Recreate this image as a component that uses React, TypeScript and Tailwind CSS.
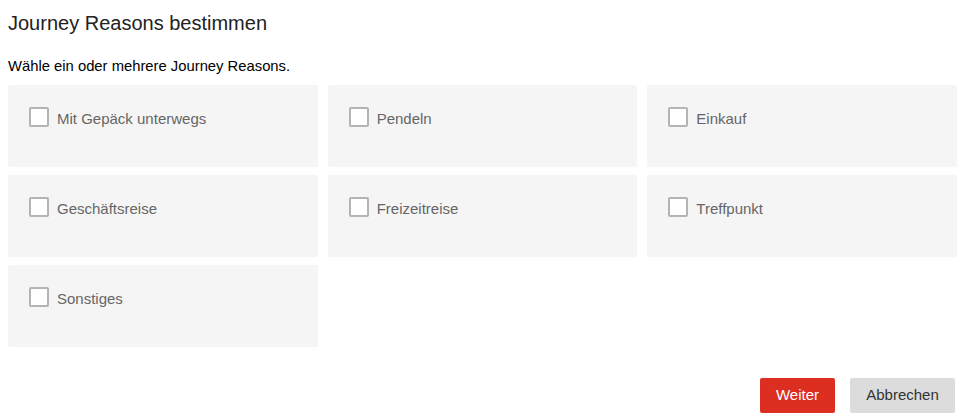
import { useState } from 'react';

const reasons = [
  'Mit Gepäck unterwegs',
  'Pendeln',
  'Einkauf',
  'Geschäftsreise',
  'Freizeitreise',
  'Treffpunkt',
  'Sonstiges',
];

export default function App() {
  const [selected, setSelected] = useState<string[]>([]);

  const toggle = (r: string) => {
    setSelected((prev) => (prev.includes(r) ? prev.filter((x) => x !== r) : [...prev, r]));
  };

  return (
    <div className="w-[960px] h-[418px] bg-white pl-2 pr-[3px] font-['Liberation_Sans',Arial,sans-serif]">
      {/* Header */}
      <h1 className="pt-[11px] text-[20px] leading-[24px] text-[#222]">Journey Reasons bestimmen</h1>
      <p className="mt-[22px] text-[14.8px] leading-[18px] text-black">Wähle ein oder mehrere Journey Reasons.</p>

      {/* Reasons grid */}
      <div className="mt-[10px] grid grid-cols-3 gap-x-[10px] gap-y-[8px]">
        {reasons.map((r) => {
          const checked = selected.includes(r);
          return (
            <label
              key={r}
              className="h-[82px] rounded-[2px] bg-[#f5f5f5] pl-[21px] pt-[22px] flex items-start gap-[8px] cursor-pointer"
            >
              <span
                className={`w-[20px] h-[20px] rounded-[2px] border-2 border-[#b4b4b4] bg-white flex items-center justify-center ${
                  checked ? 'border-[#d52b1e]' : ''
                }`}
              >
                {checked && (
                  <svg width="12" height="12" viewBox="0 0 24 24" fill="none" stroke="#d52b1e" strokeWidth="3">
                    <path d="M4 12l5 5L20 6" />
                  </svg>
                )}
              </span>
              <input type="checkbox" className="hidden" checked={checked} onChange={() => toggle(r)} />
              <span className="mt-[2px] text-[15px] leading-[20px] text-[#666]">{r}</span>
            </label>
          );
        })}
      </div>

      {/* Footer buttons */}
      <div className="mt-[31px] pr-[2px] flex justify-end gap-[15px]">
        <button className="w-[75px] h-[35px] rounded-[2px] bg-[#dc2f22] text-white text-[15px]">Weiter</button>
        <button className="w-[105px] h-[35px] rounded-[2px] bg-[#dcdcdc] text-[#333] text-[15px]">Abbrechen</button>
      </div>
    </div>
  );
}
